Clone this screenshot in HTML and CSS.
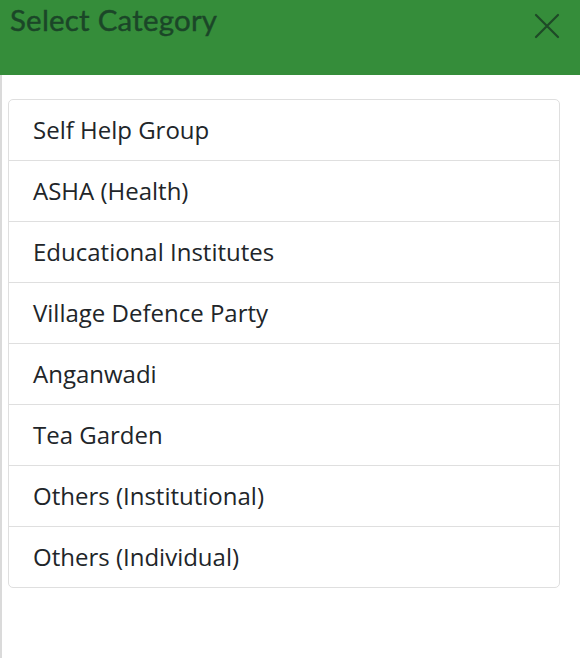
FILE: index.html
```html
<!DOCTYPE html>
<html>
<head>
<meta charset="utf-8">
<link rel="stylesheet" href="styles.css">
</head>
<body>
<div class="modal">
  <div class="modal-header">
    <h5 class="modal-title">Select Category</h5>
    <button class="close" aria-label="Close">
      <svg width="26" height="26" viewBox="0 0 26 26"><path d="M2 2 L24 24 M24 2 L2 24" stroke="#1e4a27" stroke-width="2.2" stroke-linecap="round" fill="none"/></svg>
    </button>
  </div>
  <div class="modal-body">
    <ul class="list-group">
      <li class="list-item">Self Help Group</li>
      <li class="list-item">ASHA (Health)</li>
      <li class="list-item">Educational Institutes</li>
      <li class="list-item">Village Defence Party</li>
      <li class="list-item">Anganwadi</li>
      <li class="list-item">Tea Garden</li>
      <li class="list-item">Others (Institutional)</li>
      <li class="list-item">Others (Individual)</li>
    </ul>
  </div>
</div>
</body>
</html>
```
FILE: styles.css
```css
html, body {
  margin: 0;
  padding: 0;
  background: #ffffff;
}
.modal {
  width: 580px;
  height: 658px;
  display: flex;
  flex-direction: column;
}
.modal-header {
  height: 75px;
  background: #358d3a;
  display: flex;
  justify-content: space-between;
  align-items: flex-start;
  padding: 0 20px 0 10px;
  box-sizing: border-box;
}
.modal-title {
  margin: 0;
  font-family: "Lato", "Liberation Sans", sans-serif;
  font-weight: 400;
  font-size: 29.5px;
  line-height: 40px;
  color: #1b4628;
  letter-spacing: 0.2px;
  -webkit-text-stroke: 0.4px #1b4628;
}
.close {
  margin: 13px 0 0 0;
  padding: 0;
  border: 0;
  background: transparent;
  width: 26px;
  height: 26px;
  display: flex;
}
.modal-body {
  flex: 1;
  border-left: 2px solid #dadada;
  padding: 24px 20px 0 6px;
}
.list-group {
  list-style: none;
  margin: 0;
  padding: 0;
  border: 1px solid #dfdfdf;
  border-radius: 5px;
}
.list-item {
  height: 60px;
  box-sizing: border-box;
  display: flex;
  align-items: center;
  padding: 0 24px 2px;
  font-family: "Open Sans", "Liberation Sans", sans-serif;
  font-size: 24px;
  color: #212529;
  border-top: 1px solid #dfdfdf;
}
.list-item:first-child {
  border-top: 0;
  height: 60px;
}
.list-item + .list-item {
  height: 61px;
}
```
